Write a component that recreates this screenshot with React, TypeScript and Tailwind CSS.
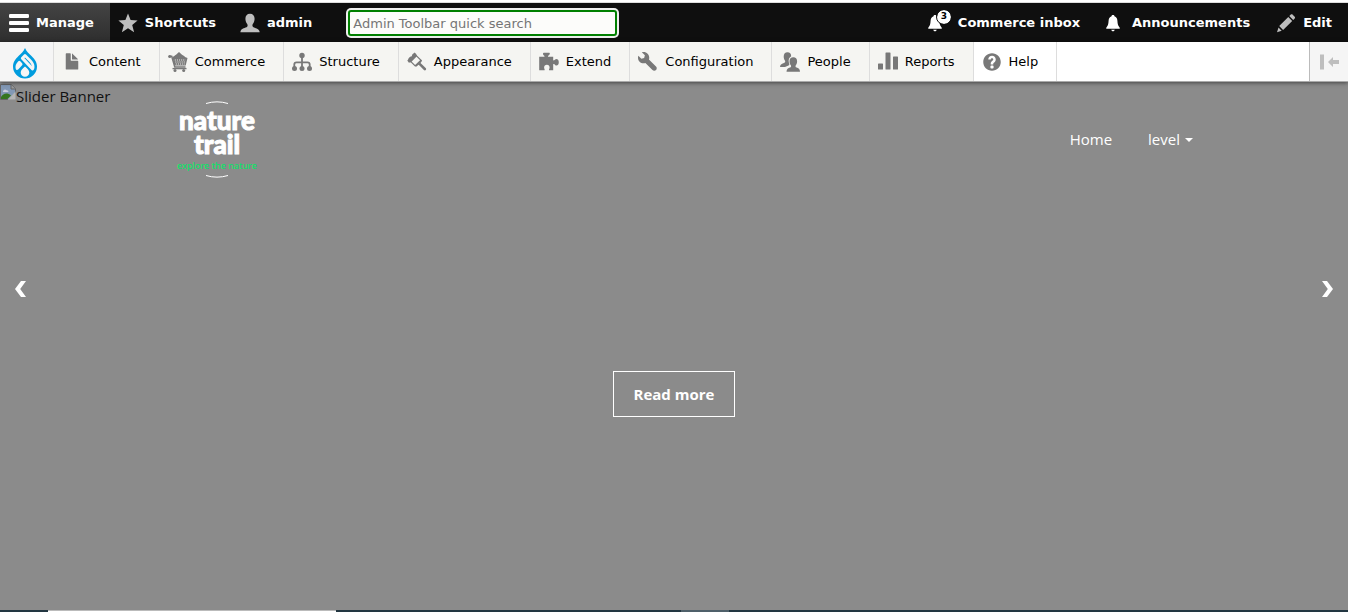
import type { ReactNode } from 'react'
import clsx from 'clsx'

function Icon({ children, className = 'size-5' }: { children: ReactNode; className?: string }) {
  return (
    <svg viewBox="0 0 20 20" fill="currentColor" aria-hidden="true" className={clsx('shrink-0', className)}>
      {children}
    </svg>
  )
}

const ICONS = {
  menu: (
    <>
      <rect y="1" width="20" height="4" rx="1.3" />
      <rect y="8" width="20" height="4" rx="1.3" />
      <rect y="15" width="20" height="4" rx="1.3" />
    </>
  ),
  star: <path d="M10 .5l2.600 6.600 7 .4-5.400 4.400 1.900 7.300-6.100-4-6.100 4 1.900-7.300L.4 7.500l7-.4z" />,
  person: (
    <path d="M10 .8c3 0 4.600 2.100 4.600 5 0 2.300-.8 4-1.800 5.300-.7 1-.5 2.600.7 3.200 2.300 1 5.800 1.500 6.200 4.900H.4c.3-3.400 3.800-3.900 6.100-4.900 1.200-.6 1.400-2.200.7-3.200-1-1.300-1.800-3-1.800-5.300 0-2.900 1.600-5 4.600-5z" />
  ),
  bell: (
    <path d="M10 1c1 0 1.600.6 1.600 1.500 2.300.8 3.200 2.700 3.300 5 .1 4 .9 5.700 2.600 7.700V16.500h-15v-1.300c1.700-2 2.500-3.700 2.600-7.700.1-2.300 1-4.200 3.300-5C8.400 1.600 9 1 10 1zM8 17.500h4c-.2 1-1 1.700-2 1.700s-1.800-.7-2-1.700z" />
  ),
  pencil: (
    <path d="M14.800 1.500c.5-.5 1.200-.5 1.700 0l2.200 2.200c.5.500.5 1.200 0 1.700l-1.500 1.500-3.900-3.900zM12.300 4l3.900 3.900-9.100 9.100L3.200 13.100zM2.500 14.500l3.200 3.200-4.700 1.500z" />
  ),
  file: (
    <path
      transform="scale(1.25)"
      d="M12.502 7h-5c-.276 0-.502-.225-.502-.5v-5c0-.275-.225-.5-.5-.5h-3c-.275 0-.5.225-.5.5v12.029c0 .275.225.5.5.5h9.002c.275 0 .5-.225.5-.5v-6.029c0-.275-.225-.5-.5-.5zM8.502 6h4c.275 0 .34-.159.146-.354l-4.293-4.292c-.195-.195-.353-.129-.353.146v4c0 .275.225.5.5.5z"
    />
  ),
  cart: (
    <>
      <path d="M4.500 4.800c1.500 0 2.200-1.300 3.500-2L11 0l3 2.700c1 .8 2.500 1 3 2.300l2.500 1-1.800 7.500H6.300z" />
      <path d="M.8 4.300h2.900L6.800 15h10.700" fill="none" stroke="currentColor" strokeWidth="1.500" />
      <circle cx="1.700" cy="4.400" r="1.500" />
      <path d="M6.800 8h10.700M7.300 10h9.700M7.800 12h9" stroke="#f5f5f2" strokeWidth=".9" strokeDasharray="1.100 1" />
      <path d="M4.500 16.600h14" stroke="currentColor" strokeWidth="1.400" />
      <circle cx="7" cy="18.500" r="1.500" />
      <circle cx="15.700" cy="18.500" r="1.500" />
    </>
  ),
  orgchart: (
    <>
      <path d="M10 3v13M2.300 16v-3.500c0-1.500.7-2.200 2.200-2.200h11c1.500 0 2.200.7 2.200 2.200V16" fill="none" stroke="currentColor" strokeWidth="1.800" />
      <circle cx="10" cy="3.500" r="2.700" />
      <circle cx="2.500" cy="16.500" r="2.500" />
      <circle cx="10" cy="16.500" r="2.500" />
      <circle cx="17.500" cy="16.500" r="2.500" />
    </>
  ),
  brush: (
    <>
      <path d="M7.600.4l1.600 1.600c.2.800.3 1.500.9 2.100L4.500 9.700c-.9.900-1.800.5-2.600 1.100L.3 8.600c.9-.8.900-2.300 2-3.200.8-.7 1.500-.5 2.200-1.200.8-.8.500-1.400 1.200-2.200.6-.7 1.300-.7 1.900-1.600z" />
      <path d="M8.500 2.800l5.500 5.500-5.800 5.600-5.600-5.500" fill="none" stroke="currentColor" strokeWidth="1.200" />
      <path d="M14 7.700l1.100 1.100-1.600 2.100 5.200 5.200c.6.600.6 1.300.1 1.900s-1.300.6-1.900 0l-5.200-5.200-2.600 1.900-1.300-1.200z" />
    </>
  ),
  puzzle: (
    <path d="M4.700.8h5.600c.8 0 .7 2-.4 2.400-.7.300-1 .8-1 1.500h5.300v3.600c1 .4 1.400-.1 1.900-.7.800-1 3.700-1.100 3.700 2.700s-2.900 3.500-3.700 2.600c-.6-.7-1-1.100-1.900-.7v6.100h-4c-.7-.5.300-1.400.4-2.600.1-1.700-1-2.900-2.700-2.900s-2.900 1.200-2.800 2.900c.1 1.200 1 2.100.4 2.600H.2V4.700h5.300c0-.8-.2-1.200-.9-1.500C3.700 2.800 3.900.8 4.700.8z" />
  ),
  wrench: (
    <path
      transform="scale(1.25)"
      d="M14.416 11.586l-.01-.008v-.001l-5.656-5.656c.15-.449.252-.921.252-1.421 0-2.485-2.016-4.500-4.502-4.500-.505 0-.981.102-1.434.255l2.431 2.431-.588 2.196-2.196.588-2.445-2.445c-.162.464-.268.956-.268 1.475 0 2.486 2.014 4.500 4.500 4.500.5 0 .972-.102 1.421-.251l5.667 5.665c.781.781 2.047.781 2.828 0s.781-2.047 0-2.828z"
    />
  ),
  people: (
    <>
      <path d="M7.500.2c2.300 0 3.700 1.500 3.700 4-2.200 1.400-2.900 3.500-2.400 6 .2 1.100.8 2 .4 2.700-.5 1-2.900 1.100-4.200 2H0c0-2.500 2.300-3.200 4-3.900 1.300-.5 1.500-1.500.9-2.500-.7-1.200-1.200-2.500-1.200-4.100C3.700 1.700 5.200.2 7.500.2z" />
      <path d="M13.300 5.200c2.400 0 3.800 1.600 3.800 4 0 1.700-.5 3-1.300 4.100-.6.900-.4 1.900.8 2.300 1.800.6 3.400 1.500 3.400 4.200H6.500c0-2.700 1.700-3.600 3.500-4.200 1.200-.4 1.400-1.400.8-2.300-.8-1.100-1.300-2.400-1.300-4.100 0-2.400 1.400-4 3.800-4z" />
    </>
  ),
  chart: (
    <>
      <rect y="11.500" width="5" height="6" rx=".6" />
      <rect x="7.500" y=".5" width="5" height="17" rx=".6" />
      <rect x="15" y="4.500" width="5" height="13" rx=".6" />
    </>
  ),
  help: (
    <path
      transform="scale(1.25)"
      d="M8.002 1c-3.868 0-7.002 3.134-7.002 7s3.134 7 7.002 7c3.865 0 7-3.134 7-7s-3.135-7-7-7zm3 5c0 .551-.16 1.085-.477 1.586l-.158.22c-.07.093-.189.241-.361.393-.168.148-.35.299-.545.447l-.203.189-.141.129-.096.17-.021.235v.63h-2.001v-.704c.026-.396.078-.73.204-.999.125-.269.271-.498.439-.688l.225-.21-.01-.015.176-.14.137-.128c.186-.139.357-.277.516-.417l.148-.18c.117-.172.176-.361.176-.567 0-.516-.414-.96-1.001-.96-.552 0-1 .448-1 1l-.006.009h-1.999v-.009c0-1.654 1.346-3 3.001-3 1.654 0 3 1.346 3 3zm-1.750 6.619c0 .344-.281.625-.625.625h-1.250c-.345 0-.626-.281-.626-.625v-1.238c0-.344.281-.625.626-.625h1.250c.344 0 .625.281.625.625v1.238z"
    />
  ),
}

type IconName = keyof typeof ICONS

const TRAY_ITEMS: { label: string; icon: IconName }[] = [
  { label: 'Content', icon: 'file' },
  { label: 'Commerce', icon: 'cart' },
  { label: 'Structure', icon: 'orgchart' },
  { label: 'Appearance', icon: 'brush' },
  { label: 'Extend', icon: 'puzzle' },
  { label: 'Configuration', icon: 'wrench' },
  { label: 'People', icon: 'people' },
  { label: 'Reports', icon: 'chart' },
  { label: 'Help', icon: 'help' },
]

function DrupalDrop() {
  return (
    <svg viewBox="0 0 24 31" aria-hidden="true" className="h-[31px] w-6">
      <path
        d="M12 0c1.500 3.500 4 5.500 6.500 8C21.500 11 24 14 24 18.500A12 12 0 0 1 12 30.500 12 12 0 0 1 0 18.500C0 14 2.500 11 5.500 8 8 5.500 10.500 3.500 12 0z"
        fill="#009cde"
      />
      <g fill="none" stroke="#f5f5f5" strokeWidth="2.800" strokeLinecap="round" strokeLinejoin="round">
        <path d="M9.300 10.300l2.700-2.800 3.700 3.700c2.800 2.800 4.800 4.500 4.400 7.800-.1 1-.3 1.600-.6 2.100z" />
        <path d="M6.300 14.300c-2 2-2.800 4.300-2.200 6.200l4-4.300z" fill="#f5f5f5" />
      </g>
      <path d="M10.500 11l9 9.500" stroke="#f5f5f5" strokeWidth="2.500" />
      <path d="M12 18.500c2.500 2.300 4.300 3.700 4.300 6a4.300 4.300 0 0 1-8.600 0c0-2.300 1.800-3.700 4.300-6z" fill="#f5f5f5" />
    </svg>
  )
}

function ToolbarBar() {
  return (
    <nav aria-label="Toolbar" className="flex h-[39px] items-center bg-[#0f0f0f] text-[13px] font-bold text-white">
      <button className="flex h-full items-center gap-[7px] bg-linear-to-b from-[#444] to-[#2e2e2e] pr-4 pl-[9px]">
        <Icon>{ICONS.menu}</Icon>
        Manage
      </button>
      <a href="#shortcuts" className="flex h-full items-center gap-[7px] px-2">
        <Icon className="size-5 text-[#bebebe]">{ICONS.star}</Icon>
        Shortcuts
      </a>
      <a href="#admin" className="ml-4 flex h-full items-center gap-[7px]">
        <Icon className="size-5 text-[#bebebe]">{ICONS.person}</Icon>
        admin
      </a>
      <input
        type="search"
        aria-label="Admin Toolbar quick search"
        placeholder="Admin Toolbar quick search"
        className="ml-9 h-[26px] w-[269px] rounded-[3px] border-2 border-[#008000] bg-[#fcfcfa] px-[3px] pt-px font-normal text-black shadow-[0_0_0_2px_#eee] outline-none placeholder:text-[#757575]"
      />
      <div className="ml-auto flex h-full items-center">
        <a href="#inbox" className="flex items-center gap-[7px]">
          <span className="relative">
            <Icon className="size-[18px]">{ICONS.bell}</Icon>
            <span className="absolute -top-1 left-[11px] flex size-[14px] items-center justify-center rounded-full bg-white text-[9px] text-black outline outline-[#0f0f0f]">
              3
            </span>
          </span>
          <span className="pl-[7px]">Commerce inbox</span>
        </a>
        <a href="#announcements" className="ml-6 flex items-center gap-[10px]">
          <Icon className="size-[18px]">{ICONS.bell}</Icon>
          Announcements
        </a>
        <button className="ml-[26px] flex h-full items-center gap-[7px] pr-4">
          <Icon className="size-5 text-[#bebebe]">{ICONS.pencil}</Icon>
          Edit
        </button>
      </div>
    </nav>
  )
}

function ToolbarTray() {
  return (
    <nav
      aria-label="Administration menu"
      className="relative z-10 flex h-10 border-b border-[#aaa] bg-white text-[13px] text-black shadow-[0_1px_4px_rgba(0,0,0,0.5)]"
    >
      <a href="#home" aria-label="Home" className="flex w-[54px] items-center border-r border-[#ddd] bg-[#f5f5f5] pt-[3px] pl-[13px]">
        <DrupalDrop />
      </a>
      {TRAY_ITEMS.map(({ label, icon }) => (
        <a
          key={label}
          href={`#${label.toLowerCase()}`}
          className={clsx(
            'flex items-center gap-[7px] border-r border-[#ddd] pr-[18px] pl-2',
            icon !== 'help' && 'bg-[#f5f5f2]',
          )}
        >
          <Icon className="size-5 text-[#787878]">{ICONS[icon]}</Icon>
          {label}
        </a>
      ))}
      <button aria-label="Vertical orientation" className="ml-auto w-[39px] border-l border-[#bbb] bg-[#f5f5f5] pl-[10px] text-[#bebebe]">
        <Icon>
          <path d="M0 2.500h4v15H0zM13 5v3h6v4h-6v3L8 10z" />
        </Icon>
      </button>
    </nav>
  )
}

function BrokenImage() {
  return (
    <svg viewBox="0 0 16 16" aria-hidden="true" className="size-4">
      <path d="M.5.5h10.800l4.200 4.200v4L8.500 15.500H.5z" fill="#8298b5" stroke="#666" />
      <path d="M11 .5v4.500h4.500" fill="#999" stroke="#666" />
      <path d="M3 7.500a2 2 0 0 1 3.500-1.300A1.800 1.800 0 0 1 8.500 8H3z" fill="#ccd" />
      <path d="M1 13c2-3.500 6-5 10-1.500L7.500 15H1z" fill="#35751f" />
      <path d="M15.500 8v7.500H9.500l-2 .5L16 7z" fill="#b4b4b4" />
    </svg>
  )
}

function SiteLogo() {
  return (
    <a href="#front" className="flex w-[76px] flex-col items-center text-white">
      <svg viewBox="0 0 22 3" aria-hidden="true" className="h-[3px] w-[22px]">
        <path d="M0 2.500Q11-.8 22 2.500" fill="none" stroke="currentColor" />
      </svg>
      <span className="flex flex-col items-center pt-1 font-[Lato] text-[26px] leading-6 font-black [-webkit-text-stroke:1px_white]">
        <span>nature</span>
        <span>trail</span>
      </span>
      <span className="pt-[2px] pb-px font-['Noto_Sans'] text-[9px] leading-4 font-medium whitespace-nowrap text-[#0be468]">
        explore the nature
      </span>
      <svg viewBox="0 0 22 3" aria-hidden="true" className="h-[3px] w-[22px]">
        <path d="M0 .5Q11 3.800 22 .5" fill="none" stroke="currentColor" />
      </svg>
    </a>
  )
}

function SlideArrow({ label, d }: { label: string; d: string }) {
  return (
    <button aria-label={label} className="px-[15px] py-4 text-white">
      <svg viewBox="0 0 11 16" aria-hidden="true" className="h-4 w-[11px]">
        <path d={d} fill="currentColor" />
      </svg>
    </button>
  )
}

function Hero() {
  return (
    <main className="relative flex flex-1 flex-col bg-[#8b8b8b] font-['Open_Sans','Noto_Sans',sans-serif] text-[15px] text-white">
      <div className="absolute top-[2px] left-0 flex text-[#111]">
        <BrokenImage />
        <span className="leading-6">Slider Banner</span>
      </div>
      <header className="mx-auto flex w-full max-w-[1140px] items-center justify-between pt-[19px] pr-[51px] pl-[75px]">
        <SiteLogo />
        <nav aria-label="Main" className="flex gap-9">
          <a href="#front">Home</a>
          <a href="#level" className="flex items-center gap-[5px]">
            level
            <svg viewBox="0 0 8 4" aria-hidden="true" className="h-1 w-2">
              <path d="M0 0h8L4 4z" fill="currentColor" />
            </svg>
          </a>
        </nav>
      </header>
      <div className="flex justify-between pt-[87px]">
        <SlideArrow label="Previous" d="M6 0h5L5.200 8 11 16H6L0 8z" />
        <SlideArrow label="Next" d="M5 0H0l5.800 8L0 16h5l6-8z" />
      </div>
      <a href="#more" className="mx-auto mt-[58px] border border-white px-5 py-[10px] leading-6 font-bold">
        Read more
      </a>
    </main>
  )
}

export default function App() {
  return (
    <div className="flex min-h-screen flex-col font-['DejaVu_Sans',Verdana,sans-serif]">
      <div className="h-[3px] border-b border-[#ddd] bg-white" />
      <ToolbarBar />
      <ToolbarTray />
      <Hero />
      <div className="flex h-[2px] bg-[#223641]">
        <div className="ml-12 w-72 border-t border-[#bbb] bg-white" />
        <div className="ml-[345px] w-12 bg-[#4f606a]" />
      </div>
    </div>
  )
}
